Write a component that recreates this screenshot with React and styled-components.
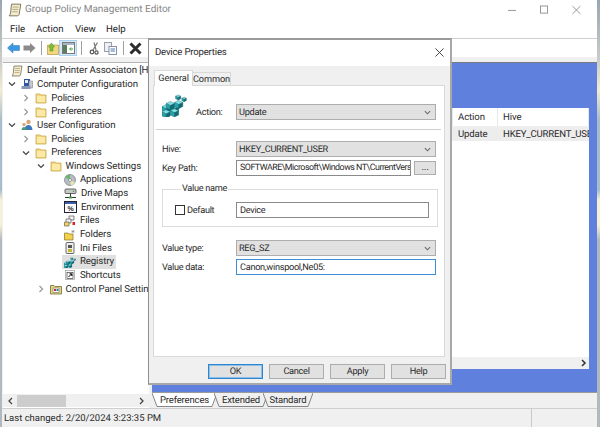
import React from "react";
import styled, { createGlobalStyle } from "styled-components";

const Global = createGlobalStyle`
  html, body { margin: 0; padding: 0; }
  body { width: 600px; height: 427px; overflow: hidden; font-family: Roboto, "Open Sans", "Liberation Sans", sans-serif; font-size: 9.5px; color: #2a2a2a; text-rendering: geometricPrecision; }
  * { box-sizing: border-box; }
`;

const Desktop = styled.div`
  position: relative; width: 600px; height: 427px; padding: 0 3px 0 2px; overflow: hidden;
  background: linear-gradient(180deg, #9aa6b0 0, #c9ccc9 60px, #f3ecd0 90px, #a9bccb 120px, #a9bccb 190px, #f7f0d6 200px, #f7f0d6 225px, #b0b8c0 240px, #b0b8c0 427px);
`;
const Window = styled.div`
  width: 595px; height: 427px; display: flex; flex-direction: column; background: #f0f0f0;
`;
const TitleBar = styled.div`
  height: 20px; flex: none; background: #fff; display: flex; align-items: center; padding: 0 0 1px 6px; gap: 3px; color: #868686; font-size: 10px;
`;
const TitleText = styled.span`flex: 1;`;
const WinButtons = styled.div`
  display: flex; align-items: center; width: 97px; color: #8c8c8c;
  svg { margin-left: 8px; margin-right: 16px; }
`;
const MenuBar = styled.div`
  height: 19px; flex: none; background: #fff; display: flex; align-items: center; padding-left: 8px; font-size: 9.6px; color: #222; border-bottom: 1px solid #cfcfcf;
`;
const MenuItem = styled.span`width: ${p => p.$w}px;`;
const ToolBar = styled.div`
  height: 18px; flex: none; background: #fff; display: flex; align-items: center; padding-left: 3px;
`;
const ToolSlot = styled.div`
  width: ${p => p.$w}px; height: 16px; display: flex; align-items: center; justify-content: center;
  ${p => p.$on && "background:#d5e8f7;border:1px solid #a8d2f0;"}
`;
const ToolSep = styled.div`width: 1px; height: 14px; background: #a0a0a0; margin: 0 4px;`;
const Main = styled.div`
  flex: 1; min-height: 0; display: flex; padding: 5px 0 0 1px; background: #f0f0f0;
`;
const TreePane = styled.div`
  width: 146px; flex: none; background: #fff; display: flex; flex-direction: column; border-top: 1px solid #b5b5b5; overflow: hidden; margin-right: 3px;
`;
const TreeList = styled.div`flex: 1; overflow: hidden; padding-top: 1px;`;
const TreeRow = styled.div`
  height: 13.65px; display: flex; align-items: center; white-space: nowrap; padding-left: ${p => p.$level === 0 ? 4 : 4 + (p.$level - 1) * 14.3}px;
`;
const Chevron = styled.span`
  width: ${p => p.$none ? 0 : 14}px; flex: none; display: flex; align-items: center; justify-content: center; padding-right: 4px;
`;
const TreeLabel = styled.span`
  display: flex; align-items: center; gap: 4px; height: 13.65px; font-size: 9.7px; letter-spacing: -.12px; padding-right: 2px;
  ${p => p.$sel && "background:#e0e0e0; margin-left:-2px; padding-left:2px;"}
`;
const HScroll = styled.div`
  height: 13px; flex: none; display: flex; align-items: center; background: #f0f0f0; margin-bottom: 1px;
`;
const ScrollArrow = styled.span`width: 14px; flex: none; display: flex; justify-content: center;`;
const ScrollThumb = styled.div`width: 49px; height: 12px; background: #cdcdcd;`;
const ScrollRest = styled.div`flex: 1;`;
const RightCol = styled.div`flex: 1; min-width: 0; display: flex; flex-direction: column;`;
const BluePane = styled.div`
  height: 331px; flex: none; background: #5f80dc; border-top: 1px solid #7a7a7a; border-bottom: 1px solid #9a9a9a; padding: 45px 8px 23px 8px; display: flex;
`;
const ListPane = styled.div`
  flex: 1; background: #fff; display: flex; flex-direction: column; overflow: hidden; min-width: 0;
`;
const ListHead = styled.div`
  height: 19px; flex: none; display: grid; grid-template-columns: 293px 45px 1fr; align-items: center; border-bottom: 1px solid #f0f0f0;
`;
const HeadCell = styled.span`
  padding-left: ${p => p.$pad}px; height: 100%; display: flex; align-items: center; border-right: 1px solid #e8e8e8; white-space: nowrap; font-size: 9.6px; letter-spacing: -.1px;
`;
const ListRow = styled.div`
  height: 14px; flex: none; display: grid; grid-template-columns: 293px 45px minmax(0, 1fr); align-items: center; background: #ededed; white-space: nowrap; font-size: 9.6px; letter-spacing: -.2px; overflow: hidden;
`;
const ListCell = styled.span`padding-left: ${p => p.$pad}px; overflow: hidden;`;
const ListBlank = styled.div`flex: 1;`;
const ListScroll = styled.div`
  height: 12px; flex: none; background: #f0f0f0; display: flex; justify-content: flex-end; align-items: center; padding-right: 2px;
`;
const SheetTabs = styled.div`
  height: 14px; flex: none; display: flex; background: #f0f0f0;
`;
const SheetTab = styled.div`
  position: relative; width: ${p => p.$w}px; margin-right: ${p => p.$m}px; height: 14px; display: flex; align-items: center; justify-content: center; font-size: 9.5px; letter-spacing: -.15px;
  svg { position: absolute; left: 0; top: 0; }
  span { position: relative; }
`;
const StatusBar = styled.div`
  height: 19px; flex: none; display: flex; align-items: stretch; border-top: 1px solid #cfcfcf; background: #f0f0f0; font-size: 9.5px;
`;
const StatusMain = styled.div`width: 530px; padding-left: 2px; display: flex; align-items: center; border-right: 1px solid #c8c8c8;`;

const Dialog = styled.div`
  position: absolute; left: 148px; top: 38px; width: 304px; height: 347px; background: #f0f0f0; border: 1px solid #8f8f8f; border-top: 2px solid #9a9a9a; border-right: 2px solid #a8a8a8; border-bottom: 2px solid #a8a8a8; display: flex; flex-direction: column; letter-spacing: -.3px;
`;
const DlgTitle = styled.div`
  height: 26px; flex: none; background: #fff; display: flex; align-items: center; justify-content: space-between; padding: 0 6px 2px 6px; font-size: 9.6px; letter-spacing: -.2px;
`;
const DlgTabs = styled.div`
  height: 19px; flex: none; display: flex; align-items: flex-end; padding-left: 5px;
`;
const DlgTab = styled.div`
  width: ${p => p.$w}px; height: ${p => p.$on ? 16 : 14}px; background: ${p => p.$on ? "#fff" : "#f0f0f0"}; border: 1px solid #d9d9d9; border-bottom: ${p => p.$on ? "none" : "1px solid #d9d9d9"}; ${p => !p.$on && "border-left:none;"} display: flex; align-items: center; justify-content: center; font-size: 9.2px; letter-spacing: -.1px; position: relative; top: 1px;
`;
const Page = styled.div`
  margin-left: 4px; width: 292px; height: 272px; background: #fff; border: 1px solid #d9d9d9; padding: 6px 0 0 8px; flex: none;
`;
const ActionRow = styled.div`display: flex; align-items: flex-end; height: 28px;`;
const IconCell = styled.div`width: 34px; align-self: flex-start;`;
const ActionLabel = styled.span`width: 40px; height: 16px; display: flex; align-items: center; font-size: 9.2px;`;
const Divider = styled.div`height: 1px; background: #cfcfcf; width: 285px; margin: 9px 0 11px -6px;`;
const Field = styled.div`display: flex; align-items: center; height: 16px; margin-top: ${p => p.$mt || 0}px;`;
const FieldLabel = styled.span`width: 74px; flex: none; font-size: 9.2px;`;
const Combo = styled.div`
  width: 200px; height: 16px; background: #e1e1e1; border: 1px solid #adadad; display: flex; align-items: center; justify-content: space-between; padding: 0 4px 0 2px; font-size: 9.2px;
`;
const TextInput = styled.div`
  width: ${p => p.$w}px; height: 16px; background: #fff; border: 1px solid ${p => p.$focus ? "#3c8fd6" : "#8a8a8a"}; display: flex; align-items: center; padding: 0 3px; font-size: 9.2px; white-space: nowrap; overflow: hidden;
`;
const TightText = styled.span`letter-spacing: -.5px; font-size: 8.9px;`;
const SmallButton = styled.div`
  width: 22px; height: 14px; margin-left: 3px; background: #e1e1e1; border: 1px solid #adadad; display: flex; align-items: center; justify-content: center; font-size: 10px; line-height: 8px;
`;
const Group = styled.fieldset`
  width: 276px; height: 45px; margin: 6px 0 0; padding: 6px 0 0 12px; border: 1px solid #dcdcdc; min-width: 0;
`;
const GroupLegend = styled.legend`
  margin-left: 6px; padding: 0 1px; height: 14px; line-height: 14px; font-size: 9.2px;
`;
const GroupRow = styled.div`display: flex; align-items: center; height: 16px;`;
const Check = styled.span`width: 10px; height: 10px; flex: none; border: 1px solid #333; background: #fff; margin-right: 2px;`;
const CheckLabel = styled.span`width: 49px; flex: none; font-size: 9.2px;`;
const ButtonRow = styled.div`
  display: flex; justify-content: flex-end; gap: 6px; padding: 7px 4px 0 0;
`;
const DlgButton = styled.div`
  width: 55px; height: 15px; background: #e1e1e1; border: 1px solid ${p => p.$def ? "#2f85cf" : "#adadad"}; display: flex; align-items: center; justify-content: center; font-size: 9.2px;
  ${p => p.$def && "box-shadow: inset 0 0 0 1px #8cc0e8;"}
`;

const Chev = ({ down, color = "#8a8a8a", w = 8 }) => (
  <svg width={w} height={w} viewBox="0 0 8 8" fill="none" stroke={color} strokeWidth="1.2">
    {down ? <path d="M1 2.5 L4 5.5 L7 2.5" /> : <path d="M2.5 1 L5.5 4 L2.5 7" />}
  </svg>
);
const Folder = () => (
  <svg width="12" height="12" viewBox="0 0 12 12">
    <path d="M1 2 H5 L6 3 H11 V11 H1 Z" fill="#f2d77e" stroke="#c8a850" strokeWidth=".8" />
    <rect x="2" y="4" width="8" height="6" fill="#fbe9a8" />
  </svg>
);
const Scroll = ({ s = 12 }) => (
  <svg width={s} height={s} viewBox="0 0 12 12">
    <path d="M3 1 H11 L9.5 10 Q9 11 8 11 H1 Q2 10 2.2 8.5 Z" fill="#f4eccb" stroke="#77705a" strokeWidth=".8" />
    <path d="M4 3.5H9M3.8 5.5H8.7M3.6 7.5H8.4" stroke="#9a9070" strokeWidth=".6" />
  </svg>
);
const Computer = () => (
  <svg width="12" height="12" viewBox="0 0 12 12">
    <rect x="3" y="1" width="6" height="7" fill="#2c55a8" />
    <rect x="8" y="3" width="3.5" height="7" fill="#c8c8d0" stroke="#777" strokeWidth=".5" />
    <rect x="0.5" y="8" width="9" height="3" fill="#8a97b8" />
    <rect x="4" y="2" width="3" height="3" fill="#e4ecf8" />
  </svg>
);
const Users = () => (
  <svg width="12" height="12" viewBox="0 0 12 12">
    <circle cx="7.5" cy="3" r="2.2" fill="#d9a878" />
    <path d="M3.5 11 Q4 6 7.5 6 Q11 6 11.5 11 Z" fill="#3e78b8" />
    <circle cx="3" cy="5.5" r="1.7" fill="#d9a878" />
    <path d="M0.5 11 Q1 8 3 8 Q5 8 5.5 11 Z" fill="#4b9a7a" />
  </svg>
);
const Disc = () => (
  <svg width="12" height="12" viewBox="0 0 12 12">
    <circle cx="6" cy="6" r="5.5" fill="#b8bec4" stroke="#667" strokeWidth=".6" />
    <path d="M6 6 L1 3 A5.5 5.5 0 0 1 6 .5 Z" fill="#69b86a" />
    <path d="M6 6 L11 8.5 A5.5 5.5 0 0 1 7 11.4 Z" fill="#e6e6b0" />
    <circle cx="6" cy="6" r="1.5" fill="#fff" stroke="#556" strokeWidth=".5" />
  </svg>
);
const Drive = () => (
  <svg width="13" height="12" viewBox="0 0 13 12">
    <rect x="1" y="1" width="11" height="4.5" rx="1" fill="#c9c9c9" stroke="#444" strokeWidth=".8" />
    <circle cx="9.5" cy="3.2" r=".8" fill="#3ea04a" />
    <path d="M6.5 5.5V9M1 9.5H12" stroke="#333" strokeWidth="1" />
    <rect x="5" y="8.5" width="3" height="2" fill="#3ea04a" />
  </svg>
);
const Env = () => (
  <svg width="13" height="12" viewBox="0 0 13 12">
    <rect x=".5" y=".5" width="12" height="11" fill="#fff" stroke="#223" strokeWidth="1" />
    <rect x="1" y="1" width="11" height="2" fill="#3a5fa8" />
    <text x="6.5" y="9.8" fontSize="7" textAnchor="middle" fill="#222" fontFamily="Liberation Sans" fontWeight="bold">%</text>
  </svg>
);
const Files = () => (
  <svg width="12" height="12" viewBox="0 0 12 12">
    <path d="M5 1 H10 V5 H5 Z" fill="#f4f4f4" stroke="#555" strokeWidth=".7" />
    <path d="M2 4 H7 V8 H2 Z" fill="#f4f4f4" stroke="#555" strokeWidth=".7" />
    <path d="M.5 7 H5 V11 H.5 Z" fill="#f0d360" stroke="#665" strokeWidth=".7" />
    <rect x="8.5" y="7" width="2.5" height="3" fill="#e02020" />
  </svg>
);
const Folders = () => (
  <svg width="12" height="12" viewBox="0 0 12 12">
    <path d="M.5 4 H4 L5 5 H9 V11 H.5 Z" fill="#f2d050" stroke="#8a7420" strokeWidth=".7" />
    <path d="M9 1 L9 4 M7.5 2.5 L10.5 2.5 M7.8 1.3 L10.2 3.7 M10.2 1.3 L7.8 3.7" stroke="#8a8a8a" strokeWidth=".6" />
  </svg>
);
const IniFile = () => (
  <svg width="12" height="12" viewBox="0 0 12 12">
    <rect x="2" y=".5" width="8" height="11" rx="1" fill="#eee" stroke="#444" strokeWidth=".8" />
    <rect x="4" y="3" width="4" height="3" fill="#555" />
    <rect x="4" y="7" width="4" height="3" fill="#c8b830" />
  </svg>
);
const Shortcut = () => (
  <svg width="12" height="12" viewBox="0 0 12 12">
    <rect x="1.5" y="1.5" width="9" height="9" fill="#fff" stroke="#888" strokeWidth=".6" />
    <rect x="3" y="3.5" width="6" height="6" fill="#fff" stroke="#222" strokeWidth=".6" />
    <path d="M4.5 8 L7.5 5 M5.5 4.8 H7.8 V7" stroke="#000" strokeWidth="1" fill="none" />
  </svg>
);
const ControlPanel = () => (
  <svg width="12" height="12" viewBox="0 0 12 12">
    <path d="M.5 2.5 H4 L5 3.5 H11.5 V11 H.5 Z" fill="#e6d684" stroke="#746a30" strokeWidth=".8" />
    <rect x="3" y="5" width="6" height="4.5" fill="#fff" stroke="#555" strokeWidth=".5" />
    <rect x="4" y="6" width="2" height="2" fill="#c22" />
    <rect x="6.5" y="6" width="2" height="2" fill="#28a" />
  </svg>
);
const Cube = ({ x, y, s = 2.6 }) => (
  <g>
    <path d={`M${x} ${y} l${s} ${-s * 0.5} l${s} ${s * 0.5} l${-s} ${s * 0.5} Z`} fill="#7fe2e4" stroke="#0d4f55" strokeWidth=".3" />
    <path d={`M${x} ${y} l${s} ${s * 0.5} v${s} l${-s} ${-s * 0.5} Z`} fill="#22a5ad" stroke="#0d4f55" strokeWidth=".3" />
    <path d={`M${x + 2 * s} ${y} l${-s} ${s * 0.5} v${s} l${s} ${-s * 0.5} Z`} fill="#0f6c74" stroke="#0d4f55" strokeWidth=".3" />
  </g>
);
const RegistryIcon = ({ s = 12 }) => (
  <svg width={s} height={s} viewBox="0 0 24 24">
    <Cube x={0} y={14} s={4} />
    <Cube x={8} y={14} s={4} />
    <Cube x={4} y={11} s={4} />
    <Cube x={12} y={10} s={4} />
    <Cube x={0} y={19} s={4} />
    <Cube x={8} y={18} s={4} />
    <Cube x={13} y={4} s={2.5} />
    <Cube x={19} y={6} s={2.2} />
  </svg>
);
const ArrowBack = () => (
  <svg width="13" height="12" viewBox="0 0 13 12"><path d="M0.5 6 L6 1 V3.5 H12.5 V8.5 H6 V11 Z" fill="#3d97e0" stroke="#2a7cc0" strokeWidth=".5" /></svg>
);
const ArrowFwd = () => (
  <svg width="13" height="12" viewBox="0 0 13 12"><path d="M12.5 6 L7 1 V3.5 H.5 V8.5 H7 V11 Z" fill="#8a8a8a" /></svg>
);
const UpFolder = () => (
  <svg width="12" height="13" viewBox="0 0 12 13">
    <path d="M.5 3 H11.5 V12.5 H.5 Z" fill="#f2d77e" stroke="#b59a40" strokeWidth=".7" />
    <path d="M3 9 V5 H1.5 L4.5 1 L7.5 5 H6 V9 Z" fill="#7cc040" stroke="#4d8a20" strokeWidth=".5" />
  </svg>
);
const ConsoleTree = () => (
  <svg width="13" height="12" viewBox="0 0 13 12">
    <rect x=".5" y=".5" width="12" height="11" fill="#fff" stroke="#7a7a7a" />
    <rect x="1" y="1" width="11" height="2" fill="#a9b8c8" />
    <rect x="1" y="3" width="4" height="8" fill="#5c7c5c" />
    <path d="M8 7 H11 M9 5.5 L7.5 7 L9 8.5" stroke="#3a9a3a" strokeWidth="1" fill="none" />
  </svg>
);
const Cut = () => (
  <svg width="11" height="13" viewBox="0 0 11 13" fill="none" stroke="#777" strokeWidth="1.2">
    <path d="M8.5 .5 L4 8 M5 .5 L7 8" />
    <circle cx="3" cy="10" r="1.8" stroke="#555" /><circle cx="7.5" cy="10.5" r="1.6" stroke="#555" />
  </svg>
);
const Copy = () => (
  <svg width="13" height="13" viewBox="0 0 13 13">
    <rect x=".5" y=".5" width="7" height="9" fill="#eef0f4" stroke="#9aa0aa" />
    <rect x="5" y="4.5" width="7.5" height="8" fill="#fff" stroke="#8892a6" />
    <path d="M6.5 7 H11 M6.5 9 H11" stroke="#4a7ab8" />
  </svg>
);
const BigX = () => (
  <svg width="13" height="13" viewBox="0 0 13 13"><path d="M1.5 1.5 L11.5 11.5 M11.5 1.5 L1.5 11.5" stroke="#2c2c2c" strokeWidth="3" /></svg>
);
const Close = ({ color, s = 10 }) => (
  <svg width={s} height={s} viewBox="0 0 10 10"><path d="M.5 .5 L9.5 9.5 M9.5 .5 L.5 9.5" stroke={color} strokeWidth="1" /></svg>
);

const tree = [
  { l: 0, t: "Default Printer Associaton [HANNAH-PC] Policy", i: <Scroll /> },
  { l: 1, c: "d", t: "Computer Configuration", i: <Computer /> },
  { l: 2, c: "r", t: "Policies", i: <Folder /> },
  { l: 2, c: "r", t: "Preferences", i: <Folder /> },
  { l: 1, c: "d", t: "User Configuration", i: <Users /> },
  { l: 2, c: "r", t: "Policies", i: <Folder /> },
  { l: 2, c: "d", t: "Preferences", i: <Folder /> },
  { l: 3, c: "d", t: "Windows Settings", i: <Folder /> },
  { l: 4, t: "Applications", i: <Disc /> },
  { l: 4, t: "Drive Maps", i: <Drive /> },
  { l: 4, t: "Environment", i: <Env /> },
  { l: 4, t: "Files", i: <Files /> },
  { l: 4, t: "Folders", i: <Folders /> },
  { l: 4, t: "Ini Files", i: <IniFile /> },
  { l: 4, t: "Registry", i: <RegistryIcon />, sel: true },
  { l: 4, t: "Shortcuts", i: <Shortcut /> },
  { l: 3, c: "r", t: "Control Panel Settings", i: <ControlPanel /> },
];

const SheetShape = ({ w, active }) => (
  <svg width={w} height="14" viewBox={`0 0 ${w} 14`}>
    <path d={`M0 0 L5 13.5 H${w - 5} L${w} 0`} fill={active ? "#fff" : "#f0f0f0"} stroke="#6a6a6a" strokeWidth=".8" />
  </svg>
);

export default function App() {
  return (
    <Desktop>
      <Global />
      <Window>
        <TitleBar>
          <Scroll s={14} />
          <TitleText>Group Policy Management Editor</TitleText>
          <WinButtons>
            <svg width="9" height="10" viewBox="0 0 9 10"><path d="M0 5.5H9" stroke="#8c8c8c" /></svg>
            <svg width="9" height="10" viewBox="0 0 9 10"><rect x=".5" y=".5" width="8" height="8" fill="none" stroke="#8c8c8c" /></svg>
            <Close color="#8c8c8c" />
          </WinButtons>
        </TitleBar>
        <MenuBar>
          <MenuItem $w={26}>File</MenuItem>
          <MenuItem $w={39}>Action</MenuItem>
          <MenuItem $w={31}>View</MenuItem>
          <MenuItem $w={30}>Help</MenuItem>
        </MenuBar>
        <ToolBar>
          <ToolSlot $w={16}><ArrowBack /></ToolSlot>
          <ToolSlot $w={16}><ArrowFwd /></ToolSlot>
          <ToolSep />
          <ToolSlot $w={13}><UpFolder /></ToolSlot>
          <ToolSlot $w={18} $on><ConsoleTree /></ToolSlot>
          <ToolSep />
          <ToolSlot $w={16}><Cut /></ToolSlot>
          <ToolSlot $w={17}><Copy /></ToolSlot>
          <ToolSep />
          <ToolSlot $w={15}><BigX /></ToolSlot>
        </ToolBar>
        <Main>
          <TreePane>
            <TreeList>
              {tree.map((r, i) => (
                <TreeRow key={i} $level={r.l}>
                  <Chevron $none={r.l === 0}>
                    {r.c && <Chev down={r.c === "d"} color={r.c === "d" ? "#444" : "#999"} />}
                  </Chevron>
                  <TreeLabel $sel={r.sel}>{r.i}{r.t}</TreeLabel>
                </TreeRow>
              ))}
            </TreeList>
            <HScroll>
              <ScrollArrow><svg width="6" height="8" viewBox="0 0 6 8"><path d="M5 1L2 4L5 7" fill="none" stroke="#444" strokeWidth="1.3" /></svg></ScrollArrow>
              <ScrollThumb />
              <ScrollRest />
              <ScrollArrow><svg width="6" height="8" viewBox="0 0 6 8"><path d="M1 1L4 4L1 7" fill="none" stroke="#444" strokeWidth="1.3" /></svg></ScrollArrow>
            </HScroll>
          </TreePane>
          <RightCol>
            <BluePane>
              <ListPane>
                <ListHead>
                  <HeadCell $pad={0} />
                  <HeadCell $pad={5}>Action</HeadCell>
                  <HeadCell $pad={5}>Hive</HeadCell>
                </ListHead>
                <ListRow>
                  <ListCell $pad={0} />
                  <ListCell $pad={5}>Update</ListCell>
                  <ListCell $pad={5}>HKEY_CURRENT_USER</ListCell>
                </ListRow>
                <ListBlank />
                <ListScroll>
                  <svg width="6" height="8" viewBox="0 0 6 8"><path d="M1 1L4 4L1 7" fill="none" stroke="#333" strokeWidth="1.5" /></svg>
                </ListScroll>
              </ListPane>
            </BluePane>
            <SheetTabs>
              <SheetTab $w={65} $m={-3}><SheetShape w={65} active /><span>Preferences</span></SheetTab>
              <SheetTab $w={54} $m={-5}><SheetShape w={54} /><span>Extended</span></SheetTab>
              <SheetTab $w={50} $m={0}><SheetShape w={50} /><span>Standard</span></SheetTab>
            </SheetTabs>
          </RightCol>
        </Main>
        <StatusBar>
          <StatusMain>Last changed: 2/20/2024 3:23:35 PM</StatusMain>
        </StatusBar>
      </Window>

      <Dialog>
        <DlgTitle>
          Device Properties
          <Close color="#333" s={9} />
        </DlgTitle>
        <DlgTabs>
          <DlgTab $w={39} $on>General</DlgTab>
          <DlgTab $w={38}>Common</DlgTab>
        </DlgTabs>
        <Page>
          <ActionRow>
            <IconCell><RegistryIcon s={25} /></IconCell>
            <ActionLabel>Action:</ActionLabel>
            <Combo>Update<Chev down w={7} color="#666" /></Combo>
          </ActionRow>
          <Divider />
          <Field>
            <FieldLabel>Hive:</FieldLabel>
            <Combo>HKEY_CURRENT_USER<Chev down w={7} color="#666" /></Combo>
          </Field>
          <Field $mt={3}>
            <FieldLabel>Key Path:</FieldLabel>
            <TextInput $w={175}><TightText>SOFTWARE\Microsoft\Windows NT\CurrentVersion\Windows</TightText></TextInput>
            <SmallButton>...</SmallButton>
          </Field>
          <Group>
            <GroupLegend>Value name</GroupLegend>
            <GroupRow>
              <Check />
              <CheckLabel>Default</CheckLabel>
              <TextInput $w={193}>Device</TextInput>
            </GroupRow>
          </Group>
          <Field $mt={13}>
            <FieldLabel>Value type:</FieldLabel>
            <Combo>REG_SZ<Chev down w={7} color="#666" /></Combo>
          </Field>
          <Field $mt={3}>
            <FieldLabel>Value data:</FieldLabel>
            <TextInput $w={200} $focus>Canon,winspool,Ne05:</TextInput>
          </Field>
        </Page>
        <ButtonRow>
          <DlgButton $def>OK</DlgButton>
          <DlgButton>Cancel</DlgButton>
          <DlgButton>Apply</DlgButton>
          <DlgButton>Help</DlgButton>
        </ButtonRow>
      </Dialog>
    </Desktop>
  );
}
